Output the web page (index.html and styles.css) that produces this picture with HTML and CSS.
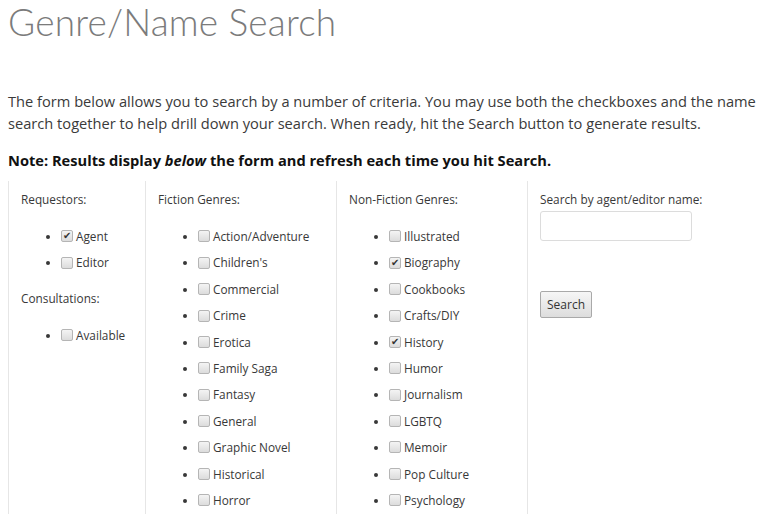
FILE: index.html
```html
<!DOCTYPE html>
<html lang="en">
<head>
<meta charset="utf-8">
<title>Genre/Name Search</title>
<link rel="stylesheet" href="styles.css">
</head>
<body>
<h1 class="page-title">Genre/Name Search</h1>
<p class="intro">The form below allows you to search by a number of criteria. You may use both the checkboxes and the name search together to help drill down your search. When ready, hit the Search button to generate results.</p>
<p class="note">Note: Results display <em>below</em> the form and refresh each time you hit Search.</p>
<form class="search-form">
  <div class="col col-req">
    <p class="col-title">Requestors:</p>
    <ul class="opts">
      <li><label><input type="checkbox" checked disabled>Agent</label></li>
      <li><label><input type="checkbox" disabled>Editor</label></li>
    </ul>
    <p class="col-title">Consultations:</p>
    <ul class="opts">
      <li><label><input type="checkbox" disabled>Available</label></li>
    </ul>
  </div>
  <div class="col">
    <p class="col-title">Fiction Genres:</p>
    <ul class="opts">
      <li><label><input type="checkbox" disabled>Action/Adventure</label></li>
      <li><label><input type="checkbox" disabled>Children's</label></li>
      <li><label><input type="checkbox" disabled>Commercial</label></li>
      <li><label><input type="checkbox" disabled>Crime</label></li>
      <li><label><input type="checkbox" disabled>Erotica</label></li>
      <li><label><input type="checkbox" disabled>Family Saga</label></li>
      <li><label><input type="checkbox" disabled>Fantasy</label></li>
      <li><label><input type="checkbox" disabled>General</label></li>
      <li><label><input type="checkbox" disabled>Graphic Novel</label></li>
      <li><label><input type="checkbox" disabled>Historical</label></li>
      <li><label><input type="checkbox" disabled>Horror</label></li>
    </ul>
  </div>
  <div class="col">
    <p class="col-title">Non-Fiction Genres:</p>
    <ul class="opts">
      <li><label><input type="checkbox" disabled>Illustrated</label></li>
      <li><label><input type="checkbox" checked disabled>Biography</label></li>
      <li><label><input type="checkbox" disabled>Cookbooks</label></li>
      <li><label><input type="checkbox" disabled>Crafts/DIY</label></li>
      <li><label><input type="checkbox" checked disabled>History</label></li>
      <li><label><input type="checkbox" disabled>Humor</label></li>
      <li><label><input type="checkbox" disabled>Journalism</label></li>
      <li><label><input type="checkbox" disabled>LGBTQ</label></li>
      <li><label><input type="checkbox" disabled>Memoir</label></li>
      <li><label><input type="checkbox" disabled>Pop Culture</label></li>
      <li><label><input type="checkbox" disabled>Psychology</label></li>
    </ul>
  </div>
  <div class="col col-name">
    <label class="col-title" for="name">Search by agent/editor name:</label>
    <input class="name-input" id="name" type="text">
    <button class="search-btn" type="button">Search</button>
  </div>
</form>
</body>
</html>
```
FILE: styles.css
```css
html, body {
  height: 514px;
  overflow: hidden;
}
body {
  margin: 0;
  padding: 0 8px;
  box-sizing: border-box;
  font-family: "Open Sans", "Liberation Sans", sans-serif;
  color: #333;
  background: #fff;
}
.page-title {
  margin: 0;
  font-family: Lato, "Open Sans", sans-serif;
  font-weight: 300;
  font-size: 37px;
  line-height: 44px;
  color: #7b7b7b;
  letter-spacing: 0.2px;
}
.intro {
  margin: 46px 0 0;
  font-size: 14.65px;
  line-height: 22px;
  color: #3a3a3a;
}
.note {
  margin: 15px 0 0;
  font-size: 14.65px;
  line-height: 22px;
  font-weight: 700;
  color: #111;
}
.search-form {
  margin-top: 10px;
  display: grid;
  grid-template-columns: 137px 191px 191px 1fr;
  width: 780px;
  font-size: 11.8px;
  color: #383838;
}
.col {
  border-left: 1px solid #e6e6e6;
  padding: 9px 12px 0;
  min-height: 340px;
}
.col-title {
  display: block;
  margin: 0;
  line-height: 18px;
}
.opts {
  margin: 15px 0 13px;
  padding-left: 40px;
}
.opts li {
  height: 26.4px;
  line-height: 26.4px;
}
.opts input {
  appearance: none;
  -webkit-appearance: none;
  display: inline-block;
  vertical-align: middle;
  width: 12px;
  height: 12px;
  margin: -3px 3px 0 0;
  border: 1px solid #b5b5b5;
  border-radius: 2px;
  background: linear-gradient(#f4f4f4, #dcdcdc);
  box-sizing: border-box;
  position: relative;
}
.opts input:checked::after {
  content: "\2714";
  position: absolute;
  left: 1px;
  top: -2px;
  font-size: 10px;
  line-height: 14px;
  color: #333;
}
.name-input {
  display: block;
  margin-top: 3px;
  width: 152px;
  height: 30px;
  box-sizing: border-box;
  border: 1px solid #dcdcdc;
  border-radius: 3px;
  background: #fff;
}
.search-btn {
  display: block;
  margin-top: 50px;
  width: 52px;
  height: 27px;
  padding: 0;
  font-family: "Open Sans", "Liberation Sans", sans-serif;
  font-size: 12px;
  color: #333;
  border: 1px solid #a9a9a9;
  border-radius: 2px;
  background: linear-gradient(#f6f6f6, #dddddd);
}
```
